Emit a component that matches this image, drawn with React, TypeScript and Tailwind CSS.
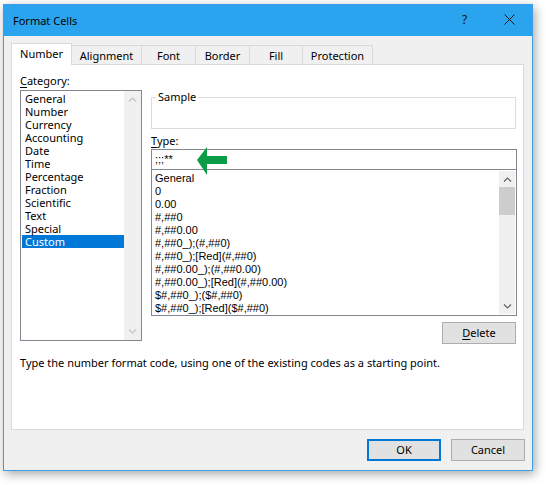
import React from "react";

const categories = [
  "General",
  "Number",
  "Currency",
  "Accounting",
  "Date",
  "Time",
  "Percentage",
  "Fraction",
  "Scientific",
  "Text",
  "Special",
  "Custom",
];

const types = [
  "General",
  "0",
  "0.00",
  "#,##0",
  "#,##0.00",
  "#,##0_);(#,##0)",
  "#,##0_);[Red](#,##0)",
  "#,##0.00_);(#,##0.00)",
  "#,##0.00_);[Red](#,##0.00)",
  "$#,##0_);($#,##0)",
  "$#,##0_);[Red]($#,##0)",
];

function Chevron({ up, color }: { up: boolean; color: string }) {
  return (
    <svg width="9" height="5" viewBox="0 0 9 5">
      <polyline
        points={up ? "1,4.5 4.5,1 8,4.5" : "1,0.5 4.5,4 8,0.5"}
        fill="none"
        stroke={color}
        strokeWidth="1.2"
      />
    </svg>
  );
}

export default function App() {
  return (
    <div
      className="w-[546px] h-[485px] bg-white pt-[4px] pl-[3px]"
      style={{ fontFamily: '"Noto Sans", "Open Sans", sans-serif' }}
    >
      <div className="w-[530px] h-[467px] border border-[#3d9de6] bg-[#f0f0f0] flex flex-col shadow-[2px_3px_10px_rgba(0,0,0,0.35)]">
        {/* Title bar */}
        <div className="h-[31px] bg-[#2aa4ef] flex items-center shrink-0">
          <div className="pl-[9px] text-[11px] text-black flex-1 leading-none pb-[1px]">
            Format Cells
          </div>
          <div className="w-[45px] h-[31px] flex items-center justify-center text-[12px] text-[#111] pb-[2px]">
            ?
          </div>
          <div className="w-[45px] h-[31px] flex items-center justify-center pb-[2px]">
            <svg width="11" height="11" viewBox="0 0 11 11">
              <path d="M0.5 0.5 L10.5 10.5 M10.5 0.5 L0.5 10.5" stroke="#111" strokeWidth="1" fill="none" />
            </svg>
          </div>
        </div>

        {/* Body */}
        <div className="flex-1 flex flex-col px-[7px] pt-[7px]">
          {/* Tabs */}
          <div className="h-[22px] flex items-end text-[11px] text-black">
            <div className="relative z-10 w-[61px] h-[22px] bg-white border-l border-t border-r border-[#d9d9d9] flex items-center justify-center pb-[1px]">
              Number
            </div>
            <div className="w-[70px] h-[20px] border-t border-r border-[#d9d9d9] flex items-center justify-center pt-[1px]">
              Alignment
            </div>
            <div className="w-[54px] h-[20px] border-t border-r border-[#d9d9d9] flex items-center justify-center pt-[1px]">
              Font
            </div>
            <div className="w-[54px] h-[20px] border-t border-r border-[#d9d9d9] flex items-center justify-center pt-[1px]">
              Border
            </div>
            <div className="w-[53px] h-[20px] border-t border-r border-[#d9d9d9] flex items-center justify-center pt-[1px]">
              Fill
            </div>
            <div className="w-[70px] h-[20px] border-t border-r border-[#d9d9d9] flex items-center justify-center pt-[1px]">
              Protection
            </div>
          </div>

          {/* Panel */}
          <div className="-mt-[1px] w-[513px] h-[366px] bg-white border border-[#d9d9d9] pt-[8px] pl-[8px] text-[11px] text-black">
            <div className="flex">
              {/* Left column */}
              <div className="w-[122px] flex flex-col">
                <div className="h-[15px] leading-[15px]">
                  <span className="underline underline-offset-2">C</span>ategory:
                </div>
                <div className="mt-[2px] h-[251px] border border-[#828790] flex">
                  <div className="flex-1 pt-[1px] pl-[1px]">
                    {categories.map((c) => (
                      <div
                        key={c}
                        className={
                          c === "Custom"
                            ? "h-[13px] leading-[13px] pl-[3px] bg-[#0078d7] text-white"
                            : "h-[13px] leading-[13px] pl-[3px]"
                        }
                      >
                        {c}
                      </div>
                    ))}
                  </div>
                  <div className="w-[17px] bg-[#f0f0f0] flex flex-col justify-between">
                    <div className="h-[17px] flex items-center justify-center">
                      <Chevron up color="#c2c2c2" />
                    </div>
                    <div className="h-[17px] flex items-center justify-center">
                      <Chevron up={false} color="#c2c2c2" />
                    </div>
                  </div>
                </div>
              </div>

              {/* Right column */}
              <div className="ml-[9px] w-[366px] flex flex-col">
                <div className="relative mt-[24px] w-[365px] h-[32px] border border-[#dcdcdc]">
                  <span className="absolute left-[4px] -top-[9px] bg-white px-[2px] leading-[15px]">
                    Sample
                  </span>
                </div>
                <div className="mt-[4px] h-[15px] leading-[15px]">
                  <span className="underline underline-offset-2">T</span>ype:
                </div>
                <div
                  className="relative mt-[1px] h-[21px] border border-[#828790] pl-[3px] flex items-center text-[11px]"
                  style={{ fontFamily: '"Liberation Sans", Arial, sans-serif' }}
                >
                  ;;;**
                  <svg
                    className="absolute left-[44px] top-[-3px] w-[32px] h-[30px]"
                    width="32"
                    height="30"
                    viewBox="0 0 32 30"
                  >
                    <polygon
                      points="1,13 11,0 11,9 31,9 31,17 11,17 11,28"
                      fill="#0c9b46"
                    />
                  </svg>
                </div>
                <div
                  className="h-[146px] border-l border-r border-b border-[#828790] flex"
                  style={{ fontFamily: '"Liberation Sans", Arial, sans-serif' }}
                >
                  <div className="flex-1 pt-[2px] pl-[3px] text-[11px]">
                    {types.map((t) => (
                      <div key={t} className="h-[13px] leading-[13px] whitespace-nowrap">
                        {t}
                      </div>
                    ))}
                  </div>
                  <div className="w-[16px] my-[1px] mr-[1px] bg-[#f0f0f0] flex flex-col">
                    <div className="h-[16px] flex items-center justify-center">
                      <Chevron up color="#606060" />
                    </div>
                    <div className="h-[28px] bg-[#cdcdcd]" />
                    <div className="flex-1" />
                    <div className="h-[16px] flex items-center justify-center">
                      <Chevron up={false} color="#606060" />
                    </div>
                  </div>
                </div>
                <div className="mt-[6px] flex justify-end pr-[1px]">
                  <div className="w-[74px] h-[22px] bg-[#e1e1e1] border border-[#adadad] flex items-center justify-center">
                    <span>
                      <span className="underline underline-offset-2">D</span>elete
                    </span>
                  </div>
                </div>
              </div>
            </div>
            <div className="mt-[11px] h-[15px] leading-[15px]">
              Type the number format code, using one of the existing codes as a starting point.
            </div>
          </div>

          {/* Buttons */}
          <div className="mt-[9px] flex justify-end gap-[10px] text-[11px] text-black">
            <div className="w-[74px] h-[22px] bg-[#e1e1e1] border-2 border-[#0078d7] flex items-center justify-center">
              OK
            </div>
            <div className="w-[74px] h-[22px] bg-[#e1e1e1] border border-[#adadad] flex items-center justify-center">
              Cancel
            </div>
          </div>
        </div>
      </div>
    </div>
  );
}
